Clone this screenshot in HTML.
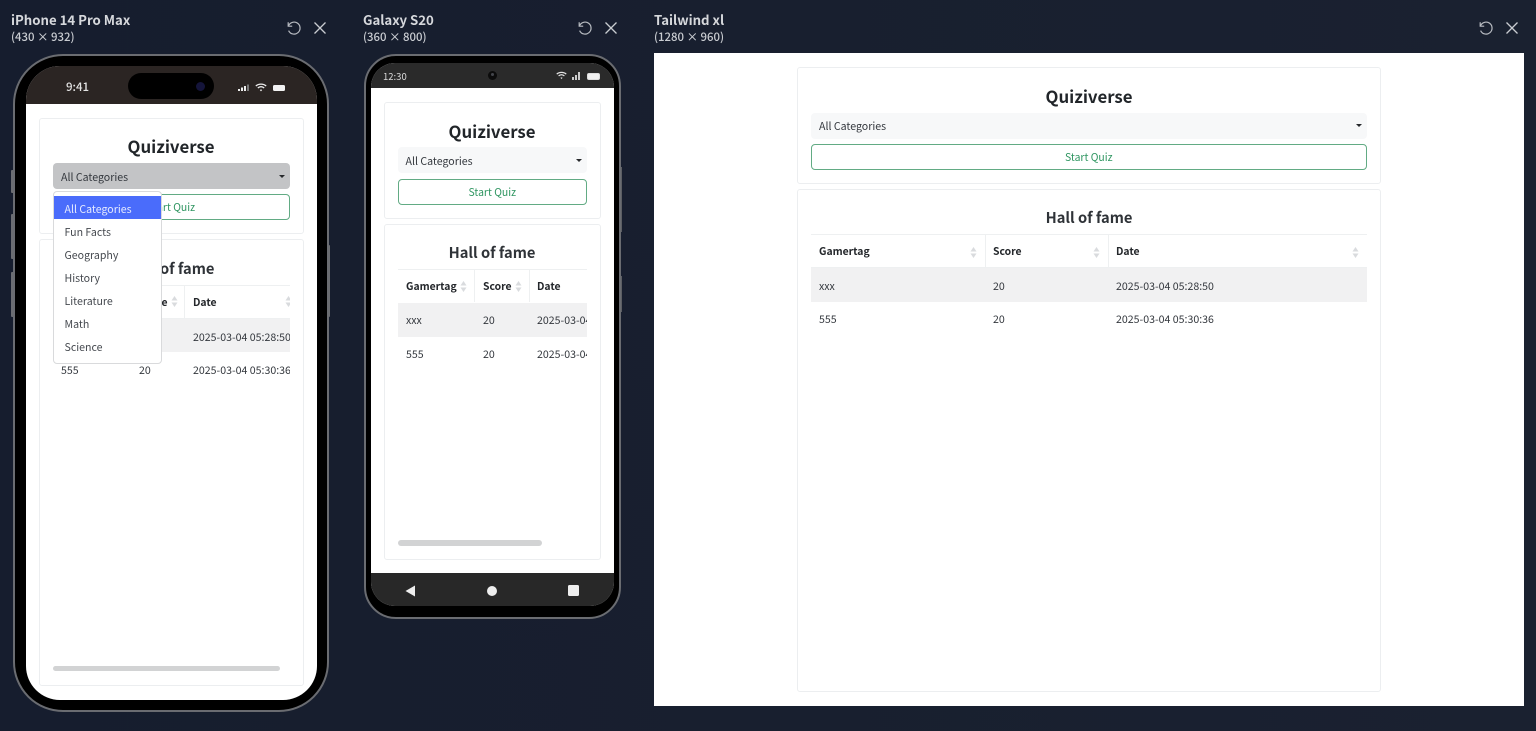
<!DOCTYPE html>
<html><head><meta charset="utf-8"><title>Responsive preview</title>
<style>
html,body{margin:0;padding:0;width:1536px;height:731px;overflow:hidden;background:#19202f}
body{position:relative;font-family:"Noto Sans CJK JP","Liberation Sans",sans-serif;color:#2b2f36;filter:blur(.35px);background:linear-gradient(90deg,#161d2e,#1a2130)}
.a{position:absolute;box-sizing:border-box}
.t{position:absolute;white-space:nowrap;line-height:20px;height:20px;font-size:10.6px;color:#33373d;margin-top:1px}
.lab{color:#d6d8dc;font-size:13.2px;font-weight:700;margin-top:0}
.sub{color:#c9ccd1;font-size:11.4px;font-weight:500;margin-top:0}
.card{position:absolute;box-sizing:border-box;background:#fff;border:1px solid #eceef0;border-radius:3px}
.h1{font-weight:700;font-size:16.8px;color:#212529;transform:translateX(-50%);margin-top:0}
.h2{font-weight:700;font-size:14.7px;color:#2f3338;transform:translateX(-50%);margin-top:0}
.sel{position:absolute;box-sizing:border-box;background:#f7f8f9;border-radius:4px}
.btn{position:absolute;box-sizing:border-box;background:#fff;border:1px solid #62ab84;border-radius:4px;color:#2e9560;font-size:10.4px;line-height:24px;text-align:center}
.th{font-weight:700;color:#24272b;font-size:10.4px;margin-top:0}
.bar{position:absolute;background:#d2d3d4;border-radius:3px}
.line{position:absolute;background:#eef0f1}
.row{position:absolute;background:#f1f1f2}
.caret{position:absolute;width:0;height:0;border-left:3px solid transparent;border-right:3px solid transparent;border-top:3px solid #26282b}
svg{position:absolute;overflow:visible}
.clip{position:absolute;overflow:hidden}
</style></head><body>

<!-- labels -->
<div class="t lab" style="left:11px;top:10px">iPhone 14 Pro Max</div>
<div class="t sub" style="left:11px;top:27px">(430 × 932)</div>
<div class="t lab" style="left:363px;top:10px">Galaxy S20</div>
<div class="t sub" style="left:363px;top:27px">(360 × 800)</div>
<div class="t lab" style="left:654px;top:10px">Tailwind xl</div>
<div class="t sub" style="left:654px;top:27px">(1280 × 960)</div>

<!-- header icons -->
<svg style="left:286px;top:20px" width="16" height="16" viewBox="0 0 16 16" fill="none" stroke="#b9bcc2" stroke-width="1.2"><path d="M2.2 2.2v4h4"/><path d="M2.4 6.1A6 6 0 1 1 2.6 10.6"/></svg>
<svg style="left:313px;top:21px" width="14" height="14" viewBox="0 0 14 14" stroke="#c9ccd1" stroke-width="1.3"><path d="M1.5 1.5l11 11M12.5 1.5l-11 11"/></svg>
<svg style="left:577px;top:20px" width="16" height="16" viewBox="0 0 16 16" fill="none" stroke="#b9bcc2" stroke-width="1.2"><path d="M2.2 2.2v4h4"/><path d="M2.4 6.1A6 6 0 1 1 2.6 10.6"/></svg>
<svg style="left:604px;top:21px" width="14" height="14" viewBox="0 0 14 14" stroke="#c9ccd1" stroke-width="1.3"><path d="M1.5 1.5l11 11M12.5 1.5l-11 11"/></svg>
<svg style="left:1478px;top:20px" width="16" height="16" viewBox="0 0 16 16" fill="none" stroke="#b9bcc2" stroke-width="1.2"><path d="M2.2 2.2v4h4"/><path d="M2.4 6.1A6 6 0 1 1 2.6 10.6"/></svg>
<svg style="left:1505px;top:21px" width="14" height="14" viewBox="0 0 14 14" stroke="#c9ccd1" stroke-width="1.3"><path d="M1.5 1.5l11 11M12.5 1.5l-11 11"/></svg>

<!-- iPhone -->
<div class="a" style="left:11px;top:170px;width:3px;height:23px;background:#6b6d72;border-radius:1px 0 0 1px"></div>
<div class="a" style="left:11px;top:214px;width:3px;height:45px;background:#6b6d72;border-radius:1px 0 0 1px"></div>
<div class="a" style="left:11px;top:272px;width:3px;height:45px;background:#6b6d72;border-radius:1px 0 0 1px"></div>
<div class="a" style="left:327px;top:245px;width:3px;height:72px;background:#6b6d72;border-radius:0 1px 1px 0"></div>
<div class="a" style="left:13px;top:54px;width:316px;height:658px;border-radius:50px;background:#000;border:2px solid #6a6c71"></div>
<div class="a" style="left:26px;top:66px;width:291px;height:634px;border-radius:34px;background:#fff;overflow:hidden">
  <div class="a" style="left:0;top:0;width:291px;height:38px;background:#2b2523"></div>
</div>
<div class="a" style="left:128px;top:73px;width:86px;height:26px;border-radius:13px;background:#000"></div>
<div class="a" style="left:196px;top:82px;width:9px;height:9px;border-radius:50%;background:#14143a"></div>
<div class="t" style="left:66px;top:77px;margin-top:0;color:#e3e3e3;font-size:11.5px;font-weight:500">9:41</div>
<svg style="left:238px;top:84px" width="12" height="8"><rect x="0" y="5" width="2" height="2" fill="#eee"/><rect x="3" y="3.5" width="2" height="3.5" fill="#eee"/><rect x="6" y="2" width="2" height="5" fill="#eee"/><rect x="9" y="0.5" width="2" height="6.5" fill="#777"/></svg>
<svg style="left:255px;top:83px" width="12" height="9" viewBox="0 0 12 9" fill="none" stroke="#eee"><path d="M.8 3C3.8.5 8.2.5 11.2 3" stroke-width="1.3"/><path d="M2.8 5C4.8 3.4 7.2 3.4 9.2 5" stroke-width="1.3"/><path d="M4.8 7c.7-.6 1.7-.6 2.4 0L6 8.4z" fill="#eee" stroke="none"/></svg>
<div class="a" style="left:273px;top:84.5px;width:12px;height:6px;background:#f2f2f2;border-radius:1.5px"></div>

<div class="card" style="left:39px;top:118px;width:265px;height:116px"></div>
<div class="t h1" style="left:171px;top:136px">Quiziverse</div>
<div class="sel" style="left:53px;top:163px;width:236.5px;height:26px;background:#c3c4c6"></div>
<div class="t" style="left:61px;top:167px">All Categories</div>
<div class="caret" style="left:279px;top:175px"></div>
<div class="btn" style="left:53px;top:194px;width:236.5px;height:26px">Start Quiz</div>

<div class="card" style="left:39px;top:239px;width:265px;height:447px"></div>
<div class="t h2" style="left:171px;top:258.5px">Hall of fame</div>
<div class="clip" style="left:53px;top:285px;width:236.5px;height:110px">
  <div class="line" style="left:0;top:0;width:237px;height:1px"></div>
  <div class="line" style="left:0;top:33px;width:237px;height:1px"></div>
  <div class="line" style="left:78px;top:0;width:1px;height:33px"></div>
  <div class="line" style="left:131px;top:0;width:1px;height:33px"></div>
  <div class="row" style="left:0;top:34px;width:237px;height:33px"></div>
  <div class="t th" style="left:8px;top:7px">Gamertag</div>
  <div class="t th" style="left:86px;top:7px">Score</div>
  <div class="t th" style="left:140px;top:7px">Date</div>
  <svg style="left:118px;top:11px" width="7" height="11" fill="#d9dbde"><path d="M3.5 0L6.5 4.5H.5zM3.5 11L.5 6.5H6.5z"/></svg>
  <svg style="left:232px;top:11px" width="7" height="11" fill="#d9dbde"><path d="M3.5 0L6.5 4.5H.5zM3.5 11L.5 6.5H6.5z"/></svg>
  <div class="t" style="left:8px;top:42px">xxx</div>
  <div class="t" style="left:86px;top:42px">20</div>
  <div class="t" style="left:140px;top:42px">2025-03-04 05:28:50</div>
  <div class="t" style="left:8px;top:75px">555</div>
  <div class="t" style="left:86px;top:75px">20</div>
  <div class="t" style="left:140px;top:75px">2025-03-04 05:30:36</div>
</div>
<div class="bar" style="left:53px;top:666px;width:227px;height:5px"></div>

<!-- dropdown -->
<div class="a" style="left:53px;top:191px;width:109px;height:173px;background:#fff;border:1px solid #d9dadc;border-radius:4px"></div>
<div class="a" style="left:54px;top:196px;width:107px;height:23px;background:#4a6cfb"></div>
<div class="t" style="left:64.5px;top:199px;color:#e6ebff">All Categories</div>
<div class="t" style="left:64.5px;top:222px;color:#45494f">Fun Facts</div>
<div class="t" style="left:64.5px;top:245px;color:#45494f">Geography</div>
<div class="t" style="left:64.5px;top:268px;color:#45494f">History</div>
<div class="t" style="left:64.5px;top:291px;color:#45494f">Literature</div>
<div class="t" style="left:64.5px;top:314px;color:#45494f">Math</div>
<div class="t" style="left:64.5px;top:337px;color:#45494f">Science</div>

<!-- Galaxy -->
<div class="a" style="left:619px;top:167px;width:3px;height:65px;background:#5c5e63"></div>
<div class="a" style="left:619px;top:276px;width:3px;height:36px;background:#5c5e63"></div>
<div class="a" style="left:364px;top:54px;width:257px;height:565px;border-radius:32px;background:#000;border:2px solid #6a6c71"></div>
<div class="a" style="left:371px;top:63px;width:243px;height:543px;border-radius:24px;background:#fff;overflow:hidden">
  <div class="a" style="left:0;top:0;width:243px;height:25px;background:#2a2a2a"></div>
  <div class="a" style="left:0;top:510px;width:243px;height:33px;background:#282828"></div>
</div>
<div class="a" style="left:488px;top:71px;width:9px;height:9px;border-radius:50%;background:#0c0c0c"></div>
<div class="a" style="left:491px;top:73px;width:3px;height:3px;border-radius:50%;background:#44464c"></div>
<div class="t" style="left:383px;top:66px;margin-top:0;color:#d8d8d8;font-size:9.5px">12:30</div>
<svg style="left:556px;top:71px" width="11" height="9" viewBox="0 0 12 9" fill="none" stroke="#e4e4e4"><path d="M.8 3C3.8.5 8.2.5 11.2 3" stroke-width="1.3"/><path d="M2.8 5C4.8 3.4 7.2 3.4 9.2 5" stroke-width="1.3"/><path d="M4.8 7c.7-.6 1.7-.6 2.4 0L6 8.4z" fill="#e4e4e4" stroke="none"/></svg>
<svg style="left:572px;top:72px" width="10" height="8"><rect x="0" y="5" width="2" height="3" fill="#ccc"/><rect x="3" y="3" width="2" height="5" fill="#ccc"/><rect x="6" y="0" width="2" height="8" fill="#ccc"/></svg>
<div class="a" style="left:587px;top:72.5px;width:13px;height:7px;background:#f0f0f0;border:1px solid #ddd;border-radius:2px"></div>

<div class="card" style="left:384px;top:102px;width:217px;height:117px"></div>
<div class="t h1" style="left:492px;top:121px">Quiziverse</div>
<div class="sel" style="left:398px;top:147px;width:188.5px;height:26px"></div>
<div class="t" style="left:405.5px;top:151px">All Categories</div>
<div class="caret" style="left:576px;top:159px"></div>
<div class="btn" style="left:398px;top:179px;width:188.5px;height:26px">Start Quiz</div>

<div class="card" style="left:384px;top:224px;width:217px;height:336px"></div>
<div class="t h2" style="left:492px;top:242.5px">Hall of fame</div>
<div class="clip" style="left:398px;top:269px;width:188.5px;height:105px">
  <div class="line" style="left:0;top:0;width:189px;height:1px"></div>
  <div class="line" style="left:76px;top:0;width:1px;height:33px"></div>
  <div class="line" style="left:131px;top:0;width:1px;height:33px"></div>
  <div class="row" style="left:0;top:33.5px;width:189px;height:34.5px"></div>
  <div class="t th" style="left:8px;top:7px">Gamertag</div>
  <div class="t th" style="left:85px;top:7px">Score</div>
  <div class="t th" style="left:139px;top:7px">Date</div>
  <svg style="left:62px;top:11.5px" width="7" height="11" fill="#d9dbde"><path d="M3.5 0L6.5 4.5H.5zM3.5 11L.5 6.5H6.5z"/></svg>
  <svg style="left:117px;top:11.5px" width="7" height="11" fill="#d9dbde"><path d="M3.5 0L6.5 4.5H.5zM3.5 11L.5 6.5H6.5z"/></svg>
  <div class="t" style="left:8px;top:41px">xxx</div>
  <div class="t" style="left:85px;top:41px">20</div>
  <div class="t" style="left:139px;top:41px">2025-03-04 05:28:50</div>
  <div class="t" style="left:8px;top:75px">555</div>
  <div class="t" style="left:85px;top:75px">20</div>
  <div class="t" style="left:139px;top:75px">2025-03-04 05:30:36</div>
</div>
<div class="bar" style="left:398px;top:540px;width:144px;height:5.5px"></div>

<svg style="left:405px;top:585px" width="11" height="12" fill="#eee"><path d="M10 .5V11.5L.5 6z"/></svg>
<div class="a" style="left:487px;top:586px;width:10px;height:10px;border-radius:50%;background:#eee"></div>
<div class="a" style="left:568px;top:585px;width:11px;height:11px;border-radius:1.5px;background:#eee"></div>

<!-- Tailwind xl -->
<div class="a" style="left:654px;top:53px;width:870px;height:653px;background:#fff"></div>
<div class="card" style="left:797px;top:67px;width:584px;height:117px"></div>
<div class="t h1" style="left:1089px;top:86px">Quiziverse</div>
<div class="sel" style="left:811px;top:113px;width:555.5px;height:25.5px"></div>
<div class="t" style="left:819px;top:116px">All Categories</div>
<div class="caret" style="left:1356px;top:124px"></div>
<div class="btn" style="left:811px;top:144px;width:555.5px;height:26px">Start Quiz</div>

<div class="card" style="left:797px;top:189px;width:584px;height:503px"></div>
<div class="t h2" style="left:1089px;top:207.5px">Hall of fame</div>
<div class="line" style="left:811px;top:234px;width:555.5px;height:1px"></div>
<div class="line" style="left:811px;top:267px;width:555.5px;height:1px"></div>
<div class="line" style="left:985px;top:234px;width:1px;height:33px"></div>
<div class="line" style="left:1107.5px;top:234px;width:1px;height:33px"></div>
<div class="row" style="left:811px;top:268px;width:555.5px;height:34px"></div>
<div class="t th" style="left:819px;top:241px">Gamertag</div>
<div class="t th" style="left:993px;top:241px">Score</div>
<div class="t th" style="left:1116px;top:241px">Date</div>
<svg style="left:970px;top:246.5px" width="7" height="11" fill="#d9dbde"><path d="M3.5 0L6.5 4.5H.5zM3.5 11L.5 6.5H6.5z"/></svg>
<svg style="left:1093px;top:246.5px" width="7" height="11" fill="#d9dbde"><path d="M3.5 0L6.5 4.5H.5zM3.5 11L.5 6.5H6.5z"/></svg>
<svg style="left:1352px;top:246.5px" width="7" height="11" fill="#d9dbde"><path d="M3.5 0L6.5 4.5H.5zM3.5 11L.5 6.5H6.5z"/></svg>
<div class="t" style="left:819px;top:276px">xxx</div>
<div class="t" style="left:993px;top:276px">20</div>
<div class="t" style="left:1116px;top:276px">2025-03-04 05:28:50</div>
<div class="t" style="left:819px;top:309px">555</div>
<div class="t" style="left:993px;top:309px">20</div>
<div class="t" style="left:1116px;top:309px">2025-03-04 05:30:36</div>

</body></html>
